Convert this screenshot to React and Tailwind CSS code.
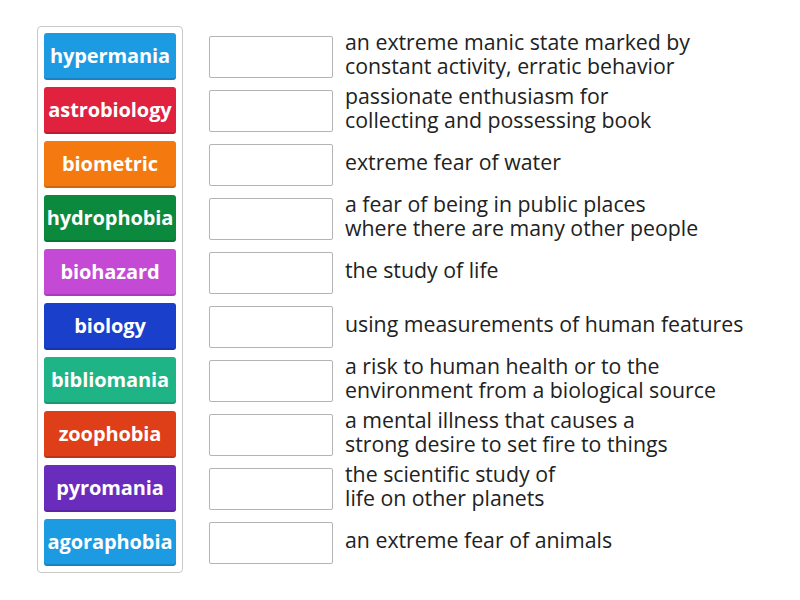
const items = [
  { word: "hypermania", color: "bg-[#1d9be2]", def: ["an extreme manic state marked by", "constant activity, erratic behavior"] },
  { word: "astrobiology", color: "bg-[#e0223f]", def: ["passionate enthusiasm for", "collecting and possessing book"] },
  { word: "biometric", color: "bg-[#f47a10]", def: ["extreme fear of water"] },
  { word: "hydrophobia", color: "bg-[#0b8a3e]", def: ["a fear of being in public places", "where there are many other people"] },
  { word: "biohazard", color: "bg-[#c44ad6]", def: ["the study of life"] },
  { word: "biology", color: "bg-[#1a3fcb]", def: ["using measurements of human features"] },
  { word: "bibliomania", color: "bg-[#1fb485]", def: ["a risk to human health or to the", "environment from a biological source"] },
  { word: "zoophobia", color: "bg-[#df3f18]", def: ["a mental illness that causes a", "strong desire to set fire to things"] },
  { word: "pyromania", color: "bg-[#6a2cbd]", def: ["the scientific study of", "life on other planets"] },
  { word: "agoraphobia", color: "bg-[#1d9be2]", def: ["an extreme fear of animals"] },
];

export default function App() {
  return (
    <div className="w-[800px] h-[600px] bg-white font-['Open_Sans',sans-serif] pt-[26px] pl-[37px] flex items-start">
      {/* tiles */}
      <div className="border border-[#c8c8c8] rounded-[4px] p-[6px] flex flex-col gap-[7px] bg-white">
        {items.map((it) => (
          <div
            key={it.word}
            className={`${it.color} w-[132px] h-[47px] rounded-[3px] flex items-center justify-center pb-[2px] text-white font-bold text-[20px] tracking-[-0.1px] shadow-[inset_0_-2px_0_rgba(0,0,0,0.15)]`}
          >
            {it.word}
          </div>
        ))}
      </div>

      {/* answer slots */}
      <div className="flex flex-col gap-[7px] pt-[7px] ml-[26px]">
        {items.map((it) => (
          <div key={it.word} className="h-[47px] flex items-center">
            <div className="w-[124px] h-[42px] border border-[#b4b4b4] rounded-[2px] bg-white shrink-0" />
            <div className="ml-[12px] -mt-[5px] text-[21.3px] leading-[24px] text-[#222] whitespace-nowrap">
              {it.def.map((l) => (
                <div key={l}>{l}</div>
              ))}
            </div>
          </div>
        ))}
      </div>
    </div>
  );
}
